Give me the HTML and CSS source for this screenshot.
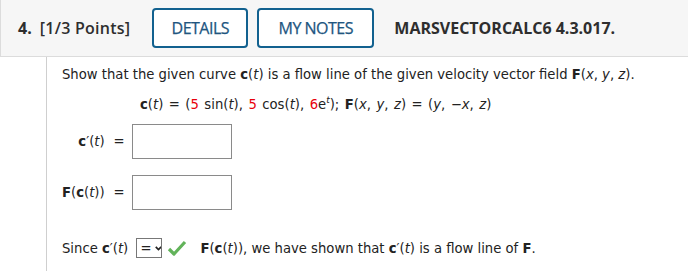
FILE: index.html
```html
<!DOCTYPE html>
<html>
<head>
<meta charset="utf-8">
<link rel="stylesheet" href="styles.css">
</head>
<body>
<div class="header">
  <span class="qnum">4.</span>
  <span class="points">[1/3 Points]</span>
  <button class="btn btn-details">DETAILS</button>
  <button class="btn btn-notes">MY NOTES</button>
  <span class="code">MARSVECTORCALC6 4.3.017.</span>
</div>
<div class="content">
  <p class="intro">Show that the given curve <b>c</b>(<i>t</i>) is a flow line of the given velocity vector field <b>F</b>(<i>x</i>, <i>y</i>, <i>z</i>).</p>
  <p class="eq"><b>c</b>(<i>t</i>) = (<span class="red">5</span> sin(<i>t</i>), <span class="red">5</span> cos(<i>t</i>), <span class="red">6</span>e<sup><i>t</i></sup>); <b>F</b>(<i>x</i>, <i>y</i>, <i>z</i>) = (<i>y</i>, −<i>x</i>, <i>z</i>)</p>
  <div class="answers">
    <span class="lbl"><b>c</b>′(<i>t</i>)</span><span class="eqs">=</span><span class="box"></span>
    <span class="lbl"><b>F</b>(<b>c</b>(<i>t</i>))</span><span class="eqs">=</span><span class="box"></span>
  </div>
  <p class="since">Since <b>c</b>′(<i>t</i>) <span class="sel">=<svg class="chev" width="9" height="7" viewBox="0 0 9 7"><path d="M1 1.5 L4.5 5 L8 1.5" fill="none" stroke="#222" stroke-width="2.2"/></svg></span><svg class="check" width="20" height="18" viewBox="0 0 20 18"><path d="M2 10 L7 15 L18 3" fill="none" stroke="#62b35a" stroke-width="3.2" stroke-linejoin="round"/></svg><b>F</b>(<b>c</b>(<i>t</i>)), we have shown that <b>c</b>′(<i>t</i>) is a flow line of <b>F</b>.</p>
</div>
</body>
</html>
```
FILE: styles.css
```css
html, body {
  margin: 0;
  padding: 0;
  background: #fff;
}
body {
  width: 688px;
  height: 271px;
  overflow: hidden;
}
.header {
  height: 57px;
  box-sizing: border-box;
  background: #f6f6f6;
  border-left: 1px solid #dcdcdc;
  border-bottom: 1px solid #dcdcdc;
  display: flex;
  align-items: center;
  padding-left: 17px;
  font-family: "Open Sans", sans-serif;
  font-size: 16px;
  color: #2e2e2e;
}
.qnum {
  font-weight: 700;
  margin-right: 8px;
}
.points {
  font-weight: 600;
  margin-right: 22px;
  letter-spacing: 0.25px;
}
.btn {
  font-family: "Open Sans", sans-serif;
  font-size: 16px;
  font-weight: 500;
  color: #21557f;
  background: #fff;
  border: 2px solid #12618f;
  border-radius: 4px;
  height: 40px;
  padding: 0;
  margin: 0 9px 0 0;
  letter-spacing: -0.5px;
  -webkit-text-stroke: 0.25px #21557f;
}
.btn-details { width: 96px; }
.btn-notes { width: 117px; margin-right: 20px; }
.code {
  font-weight: 700;
  letter-spacing: 0;
}
.content {
  margin-left: 46px;
  border-left: 1px solid #cfcfcf;
  padding-left: 15px;
  height: 214px;
  font-family: "DejaVu Sans", Verdana, sans-serif;
  font-size: 13.2px;
  color: #222;
}
.content p { margin: 0; }
.content i { font-style: italic; }
.content .intro { padding-top: 10px; }
.content .eq { padding-left: 78px; padding-top: 15px; word-spacing: 1.3px; }
.red { color: #e8000b; }
sup { font-size: 9px; vertical-align: 6px; line-height: 0; }
.answers {
  display: grid;
  grid-template-columns: auto 27px 100px;
  grid-auto-rows: 35px;
  row-gap: 16px;
  align-items: center;
  justify-content: start;
  margin-top: 12px;
}
.lbl { text-align: right; }
.eqs { text-align: center; padding-left: 2px; }
.box {
  box-sizing: border-box;
  height: 35px;
  border: 1px solid #8a8a8a;
}
.content .since {
  margin-top: 28px;
  display: flex;
  align-items: center;
  white-space: pre;
}
.sel {
  display: inline-flex;
  align-items: center;
  gap: 3px;
  box-sizing: border-box;
  height: 20px;
  width: 26px;
  border: 1px solid #777;
  padding-left: 3px;
  margin-left: 4px;
}
.check { margin: 0 13px 0 5px; }
```
